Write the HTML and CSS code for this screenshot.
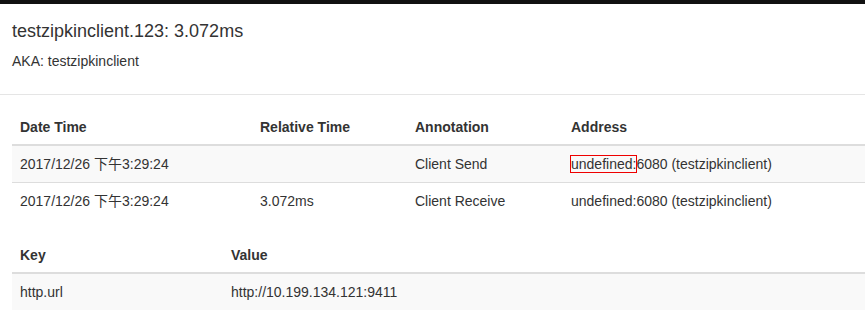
FILE: index.html
```html
<!DOCTYPE html>
<html lang="zh">
<head>
    <meta charset="UTF-8">
    <title>testzipkinclient.123</title>
    <link rel="stylesheet" href="styles.css">
</head>
<body>
    <div class="topbar"></div>
    <div class="modal">
        <div class="modal-header">
            <h4 class="modal-title">testzipkinclient.123: 3.072ms</h4>
            <h5 class="aka">AKA: testzipkinclient</h5>
        </div>

        <div class="modal-body">
            <table class="table annotations">
                <thead>
                    <tr>
                        <th class="col-date">Date Time</th>
                        <th class="col-rel">Relative Time</th>
                        <th class="col-ann">Annotation</th>
                        <th>Address</th>
                    </tr>
                </thead>
                <tbody>
                    <tr>
                        <td>2017/12/26 下午3:29:24</td>
                        <td></td>
                        <td>Client Send</td>
                        <td><span class="marked">undefined:</span>6080 (testzipkinclient)</td>
                    </tr>
                    <tr>
                        <td>2017/12/26 下午3:29:24</td>
                        <td>3.072ms</td>
                        <td>Client Receive</td>
                        <td>undefined:6080 (testzipkinclient)</td>
                    </tr>
                </tbody>
            </table>

            <table class="table binary">
                <thead>
                    <tr>
                        <th class="col-key">Key</th>
                        <th>Value</th>
                    </tr>
                </thead>
                <tbody>
                    <tr>
                        <td>http.url</td>
                        <td>http://10.199.134.121:9411</td>
                    </tr>
                </tbody>
            </table>
        </div>
    </div>
</body>
</html>
```

FILE: styles.css
```css
html, body {
    margin: 0;
    padding: 0;
    overflow: hidden;
}

body {
    font-family: "Liberation Sans", Arial, "Noto Sans CJK SC", sans-serif;
    font-size: 14px;
    line-height: 20px;
    color: #333;
    background: #fff;
}

.topbar {
    height: 4px;
    background: #111;
}

.modal {
    width: 900px;
}

.modal-header {
    padding: 16px 12px 23px;
    border-bottom: 1px solid #e5e5e5;
}

.modal-title {
    margin: 0;
    font-size: 18px;
    font-weight: normal;
    line-height: 22px;
}

.aka {
    margin: 9px 0 0;
    font-size: 14px;
    font-weight: normal;
    line-height: 20px;
}

.modal-body {
    padding: 14px 0 0 12px;
}

.table {
    width: 100%;
    border-collapse: collapse;
    border-spacing: 0;
    margin-bottom: 18px;
}

.table th,
.table td {
    padding: 8px;
    text-align: left;
    vertical-align: top;
    line-height: 20px;
}

.table th {
    padding-bottom: 7px;
    font-weight: bold;
    border-bottom: 2px solid #ddd;
}

.table td {
    border-top: 1px solid #ddd;
}

.table tbody tr:nth-child(odd) {
    background: #f9f9f9;
}

.col-date { width: 224px; }
.col-rel { width: 139px; }
.col-ann { width: 140px; }
.col-key { width: 195px; }

.marked {
    outline: 1px solid #e00;
    outline-offset: 0;
}
```
